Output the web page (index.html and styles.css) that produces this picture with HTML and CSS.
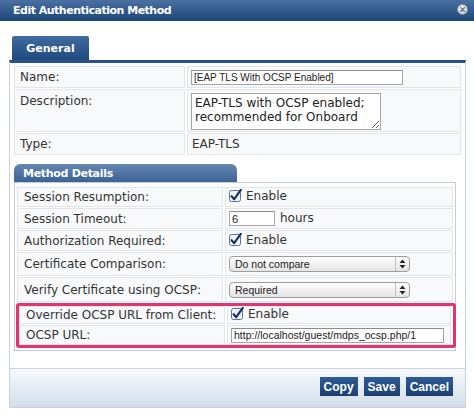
FILE: index.html
```html
<!DOCTYPE html>
<html lang="en">
<head>
  <meta charset="UTF-8" />
  <title>Edit Authentication Method</title>
  <link rel="stylesheet" href="styles.css">
</head>
<body>
  <div class="dialog">
    <div class="titlebar">
      <span class="title">Edit Authentication Method</span>
      <span class="close">
        <svg width="11" height="11" viewBox="0 0 11 11">
          <defs>
            <radialGradient id="cg" cx="40%" cy="35%" r="70%">
              <stop offset="0" stop-color="#ffffff"/>
              <stop offset="1" stop-color="#b9c3cf"/>
            </radialGradient>
          </defs>
          <circle cx="5.5" cy="5.5" r="5" fill="url(#cg)" stroke="#8592a3" stroke-width="0.6"/>
          <path d="M3.6 3.6 L7.4 7.4 M7.4 3.6 L3.6 7.4" stroke="#5b6675" stroke-width="1.3" stroke-linecap="round"/>
        </svg>
      </span>
    </div>

    <div class="content">
      <div class="tabs"><div class="tab">General</div></div>

      <div class="panel">
        <table class="form general">
          <tr>
            <td class="label">Name:</td>
            <td class="value"><input class="text name" type="text" value="[EAP TLS With OCSP Enabled]"></td>
          </tr>
          <tr class="tall">
            <td class="label top">Description:</td>
            <td class="value top"><textarea class="desc">EAP-TLS with OCSP enabled; recommended for Onboard</textarea></td>
          </tr>
          <tr>
            <td class="label">Type:</td>
            <td class="value plain">EAP-TLS</td>
          </tr>
        </table>

        <div class="section">
          <div class="section-head">Method Details</div>
          <div class="section-box">
            <table class="form details">
              <tr class="r1">
                <td class="label">Session Resumption:</td>
                <td class="value"><span class="check"><svg width="13" height="13" viewBox="0 0 13 13"><rect x="0.5" y="1.5" width="11" height="11" rx="2" fill="#eef3fb" stroke="#5d7393"/><path d="M2.6 7.2 L5.2 10.2 L11.8 0.8" fill="none" stroke="#14305c" stroke-width="2.1" stroke-linecap="round" stroke-linejoin="round"/></svg></span>Enable</td>
              </tr>
              <tr class="r2">
                <td class="label">Session Timeout:</td>
                <td class="value"><input class="text hours" type="text" value="6"><span class="unit">hours</span></td>
              </tr>
              <tr class="r3">
                <td class="label">Authorization Required:</td>
                <td class="value"><span class="check"><svg width="13" height="13" viewBox="0 0 13 13"><rect x="0.5" y="1.5" width="11" height="11" rx="2" fill="#eef3fb" stroke="#5d7393"/><path d="M2.6 7.2 L5.2 10.2 L11.8 0.8" fill="none" stroke="#14305c" stroke-width="2.1" stroke-linecap="round" stroke-linejoin="round"/></svg></span>Enable</td>
              </tr>
              <tr class="r4">
                <td class="label">Certificate Comparison:</td>
                <td class="value">
                  <div class="select"><span class="opt">Do not compare</span><span class="arrows"><svg width="7" height="10" viewBox="0 0 7 10"><path d="M3.5 0.5 L6.5 4 L0.5 4 Z M0.5 6 L6.5 6 L3.5 9.5 Z" fill="#222"/></svg></span></div>
                </td>
              </tr>
              <tr class="r5">
                <td class="label">Verify Certificate using OCSP:</td>
                <td class="value">
                  <div class="select"><span class="opt">Required</span><span class="arrows"><svg width="7" height="10" viewBox="0 0 7 10"><path d="M3.5 0.5 L6.5 4 L0.5 4 Z M0.5 6 L6.5 6 L3.5 9.5 Z" fill="#222"/></svg></span></div>
                </td>
              </tr>
            </table>

            <div class="highlight">
              <table class="form details">
                <tr class="r6">
                  <td class="label">Override OCSP URL from Client:</td>
                  <td class="value"><span class="check"><svg width="13" height="13" viewBox="0 0 13 13"><rect x="0.5" y="1.5" width="11" height="11" rx="2" fill="#eef3fb" stroke="#5d7393"/><path d="M2.6 7.2 L5.2 10.2 L11.8 0.8" fill="none" stroke="#14305c" stroke-width="2.1" stroke-linecap="round" stroke-linejoin="round"/></svg></span>Enable</td>
                </tr>
                <tr class="r7">
                  <td class="label">OCSP URL:</td>
                  <td class="value"><input class="text url" type="text" value="http://localhost/guest/mdps_ocsp.php/1"></td>
                </tr>
              </table>
            </div>
          </div>
        </div>
      </div>

      <div class="footer">
        <button class="btn">Copy</button>
        <button class="btn">Save</button>
        <button class="btn">Cancel</button>
      </div>
    </div>
  </div>
</body>
</html>
```

FILE: styles.css
```css
* {
  box-sizing: border-box;
}
body {
  margin: 0;
  background: #fff;
  font-family: "DejaVu Sans", Verdana, sans-serif;
  font-size: 12px;
  color: #333;
}
.dialog {
  width: 474px;
  height: 420px;
}
.titlebar {
  height: 21px;
  background: linear-gradient(#4b71a2, #1c4477);
  display: flex;
  align-items: center;
  justify-content: space-between;
  padding: 0 6px 0 13px;
}
.title {
  color: #fff;
  font-weight: bold;
  font-size: 11px;
  letter-spacing: -0.5px;
}
.close {
  display: flex;
  margin-top: -3px;
}
.content {
  padding: 15px 8px 0 9px;
}
.tab {
  margin-left: 3px;
  width: 77px;
  height: 24px;
  background: linear-gradient(#416c9f, #1f4a7e);
  color: #fff;
  font-weight: bold;
  font-size: 11px;
  text-align: center;
  line-height: 25px;
  border-radius: 2px 2px 0 0;
}
.panel {
  border-top: 3px solid #27518a;
  border-left: 1px solid #c8d3e2;
  border-right: 1px solid #c8d3e2;
  padding: 3px 4px 17px;
}
table.form {
  border-collapse: separate;
  border-spacing: 2px 1px;
  width: calc(100% + 4px);
  margin: -1px -2px;
  table-layout: fixed;
}
table.form td {
  border: 1px solid #e1e6ed;
  background: #f8f9fb;
  padding: 0;
  height: 22px;
  vertical-align: middle;
}
.general td.label {
  width: 171px;
  padding-left: 5px;
}
.general tr.tall td {
  height: 43px;
}
td.top {
  vertical-align: top !important;
}
td.label.top {
  padding-top: 4px;
}
td.value {
  padding-left: 3px !important;
}
td.value.top {
  padding-top: 3px;
}
td.plain {
  padding-left: 4px !important;
}
.text {
  border: 1px solid #a5a5a5;
  border-top-color: #8c8c8c;
  background: #fff;
  font-family: "Liberation Sans", Arial, sans-serif;
  font-size: 10px;
  color: #222;
  height: 15px;
  padding: 0 2px;
  vertical-align: middle;
}
.name {
  width: 212px;
}
.desc {
  display: block;
  width: 190px;
  height: 37px;
  font-family: "DejaVu Sans", Verdana, sans-serif;
  font-size: 12px;
  line-height: 14px;
  color: #222;
  padding: 2px 3px;
  border: 1px solid #a5a5a5;
  margin: 0;
}
.section {
  margin-top: 9px;
}
.section-head {
  width: 223px;
  height: 18px;
  background: linear-gradient(#6486b2, #3c6396);
  border-radius: 6px 6px 0 0;
  color: #fff;
  font-weight: bold;
  font-size: 11px;
  letter-spacing: -0.3px;
  line-height: 19px;
  padding-left: 9px;
}
.section-box {
  border: 1px solid #c7ccd4;
  margin-right: 5px;
  padding: 4px 2px 1px;
}
.details td.label {
  width: 206px;
  padding-left: 6px;
}
.details .r1 td {
  height: 20px;
}
.details .r2 td,
.details .r3 td {
  height: 21px;
}
.details .r4 td {
  height: 24px;
}
.details .r5 td {
  height: 25px;
}
.details .r6 td {
  height: 18px;
}
.details .r7 td {
  height: 20px;
}
.check {
  display: inline-block;
  vertical-align: -2px;
  margin: 0 4px 0 0;
}
.hours {
  width: 46px;
  font-size: 11px;
}
.unit {
  margin-left: 5px;
}
.select {
  display: flex;
  align-items: center;
  width: 181px;
  height: 16px;
  border: 1px solid #9d9d9d;
  border-radius: 4px;
  background: linear-gradient(#ffffff, #e4e4e4);
  font-family: "Liberation Sans", Arial, sans-serif;
  font-size: 10.5px;
  color: #222;
}
.select .opt {
  flex: 1;
  padding-left: 5px;
}
.select .arrows {
  width: 14px;
  height: 100%;
  border-left: 1px solid #c2c2c2;
  display: flex;
  align-items: center;
  justify-content: center;
}
.highlight {
  border: 3px solid #e5336d;
  border-radius: 3px;
  margin: 1px -3px 1px -1px;
  padding: 0 2px 0 0;
}
.url {
  width: 213px;
  font-size: 10.5px;
}
.footer {
  height: 40px;
  border: 1px solid #c8d3e2;
  background: linear-gradient(#f7f9fc, #d3deeb);
  display: flex;
  justify-content: flex-end;
  align-items: flex-start;
  gap: 6px;
  padding: 8px 12px 0 0;
}
.btn {
  height: 19px;
  padding: 0 4px;
  border: none;
  background: linear-gradient(#2d5c96, #1b406f);
  color: #fff;
  font-family: "Liberation Sans", Arial, sans-serif;
  font-weight: bold;
  font-size: 12px;
  cursor: pointer;
}
```
